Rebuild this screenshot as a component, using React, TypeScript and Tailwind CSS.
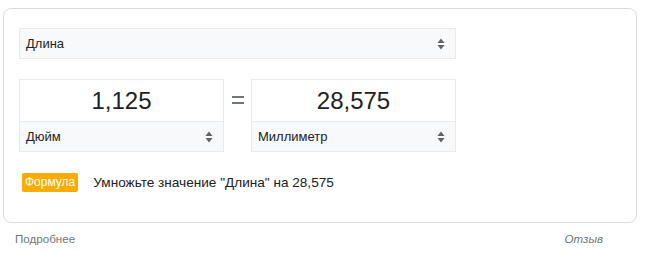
import React from "react"

const Arrows = () => (
	<svg width="8" height="12" viewBox="0 0 8 12" className="shrink-0">
		<path d="M4 0.5 L7.5 5 L0.5 5 Z" fill="#5f6368" />
		<path d="M4 11.5 L7.5 7 L0.5 7 Z" fill="#5f6368" />
	</svg>
)

const UnitSelect = ({ label, className }: { label: string; className?: string }) => (
	<div
		className={
			"flex items-center justify-between bg-[#f8f9fa] pl-[6px] pr-[10px] text-[13px] text-[#202124] " +
			(className ?? "")
		}>
		<span>{label}</span>
		<Arrows />
	</div>
)

const ValueBox = ({ value, unit }: { value: string; unit: string }) => (
	<div className="w-[205px] border border-[#e8eaed] flex flex-col">
		<div className="h-[41px] flex items-center justify-center text-[24px] text-[#202124] bg-white">
			{value}
		</div>
		<UnitSelect label={unit} className="h-[30px] border-t border-[#e8eaed]" />
	</div>
)

export default function App() {
	return (
		<div className="w-[650px] h-[254px] bg-white pt-[8px] pl-[3px] font-['Liberation_Sans',Arial,sans-serif]">
			<div className="w-[634px] h-[215px] border border-[#dadce0] rounded-lg pt-[19px] pl-[15px]">
				<UnitSelect label="Длина" className="w-[437px] h-[31px] border border-[#e8eaed]" />

				<div className="mt-[20px] flex items-start">
					<ValueBox value="1,125" unit="Дюйм" />
					<div className="w-[27px] h-[42px] flex items-center justify-center">
						<div className="flex flex-col gap-[4px]">
							<div className="w-[12px] h-[2px] bg-[#70757a]" />
							<div className="w-[12px] h-[2px] bg-[#70757a]" />
						</div>
					</div>
					<ValueBox value="28,575" unit="Миллиметр" />
				</div>

				<div className="mt-[19px] flex items-center pl-[3px]">
					<span className="bg-[#f9ab00] text-white text-[12px] leading-[19px] px-[3px] rounded-[2px]">
						Формула
					</span>
					<span className="ml-[15px] mt-[2px] text-[13.6px] text-[#202124]">
						Умножьте значение "Длина" на 28,575
					</span>
				</div>
			</div>

			<div className="mt-[7px] flex justify-between w-[600px] pl-[12px] text-[11.6px] text-[#70757a]">
				<span>Подробнее</span>
				<span className="italic">Отзыв</span>
			</div>
		</div>
	)
}
